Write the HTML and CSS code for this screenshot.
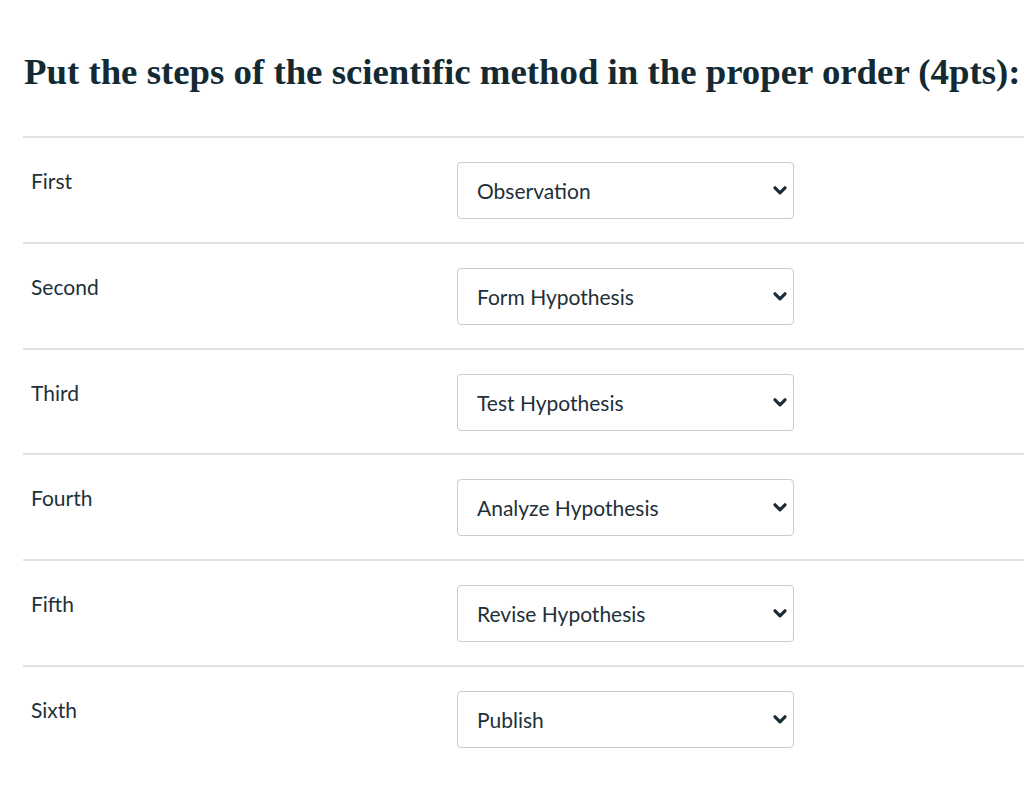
FILE: index.html
```html
<!DOCTYPE html>
<html lang="en">
<head>
    <meta charset="UTF-8">
    <meta name="viewport" content="width=device-width, initial-scale=1.0">
    <title>Scientific Method Quiz</title>
    <link rel="stylesheet" href="styles.css">
</head>
<body>

    <div class="question">
        <h1 class="question-title">Put the steps of the scientific method in the proper order (4pts):</h1>

        <div class="answers">
            <div class="answer-row">
                <span class="answer-label">First</span>
                <div class="select-wrap">
                    <select class="answer-select">
                        <option selected>Observation</option>
                    </select>
                    <svg class="chevron" viewBox="0 0 14 9"><path d="M2 1.8 L7 6.8 L12 1.8" /></svg>
                </div>
            </div>

            <div class="answer-row">
                <span class="answer-label">Second</span>
                <div class="select-wrap">
                    <select class="answer-select">
                        <option selected>Form Hypothesis</option>
                    </select>
                    <svg class="chevron" viewBox="0 0 14 9"><path d="M2 1.8 L7 6.8 L12 1.8" /></svg>
                </div>
            </div>

            <div class="answer-row">
                <span class="answer-label">Third</span>
                <div class="select-wrap">
                    <select class="answer-select">
                        <option selected>Test Hypothesis</option>
                    </select>
                    <svg class="chevron" viewBox="0 0 14 9"><path d="M2 1.8 L7 6.8 L12 1.8" /></svg>
                </div>
            </div>

            <div class="answer-row">
                <span class="answer-label">Fourth</span>
                <div class="select-wrap">
                    <select class="answer-select">
                        <option selected>Analyze Hypothesis</option>
                    </select>
                    <svg class="chevron" viewBox="0 0 14 9"><path d="M2 1.8 L7 6.8 L12 1.8" /></svg>
                </div>
            </div>

            <div class="answer-row">
                <span class="answer-label">Fifth</span>
                <div class="select-wrap">
                    <select class="answer-select">
                        <option selected>Revise Hypothesis</option>
                    </select>
                    <svg class="chevron" viewBox="0 0 14 9"><path d="M2 1.8 L7 6.8 L12 1.8" /></svg>
                </div>
            </div>

            <div class="answer-row">
                <span class="answer-label">Sixth</span>
                <div class="select-wrap">
                    <select class="answer-select">
                        <option selected>Publish</option>
                    </select>
                    <svg class="chevron" viewBox="0 0 14 9"><path d="M2 1.8 L7 6.8 L12 1.8" /></svg>
                </div>
            </div>
        </div>
    </div>

</body>
</html>
```

FILE: styles.css
```css
body {
    margin: 0;
    padding: 0;
    background-color: #ffffff;
    font-family: Lato, "Open Sans", sans-serif;
    color: #1e3039;
}

.question {
    padding-left: 23px;
}

.question-title {
    font-family: "Liberation Serif", "Times New Roman", serif;
    font-weight: bold;
    font-size: 36.8px;
    line-height: 44px;
    color: #142a33;
    margin: 0;
    padding: 50px 0 0 1px;
    height: 86px;
    white-space: nowrap;
}

.answer-row {
    display: flex;
    align-items: flex-start;
    border-top: 2px solid #dfe1e2;
    padding: 24px 0 22.8px;
}

.answer-label {
    box-sizing: border-box;
    width: 434px;
    padding-left: 8px;
    padding-top: 6px;
    font-size: 21px;
    line-height: 26px;
}

/* select look */
.select-wrap {
    position: relative;
    width: 337px;
}

.answer-select {
    -webkit-appearance: none;
    appearance: none;
    width: 100%;
    height: 57px;
    box-sizing: border-box;
    border: 1px solid #c7cdd1;
    border-radius: 4px;
    background-color: #ffffff;
    padding: 0 40px 0 19px;
    font-family: Lato, "Open Sans", sans-serif;
    font-size: 21px;
    color: #1e3039;
}

.chevron {
    position: absolute;
    right: 7px;
    top: 24px;
    width: 14px;
    height: 9px;
    fill: none;
    stroke: #1a2c35;
    stroke-width: 3.2;
    stroke-linecap: round;
    stroke-linejoin: round;
    pointer-events: none;
}
```
